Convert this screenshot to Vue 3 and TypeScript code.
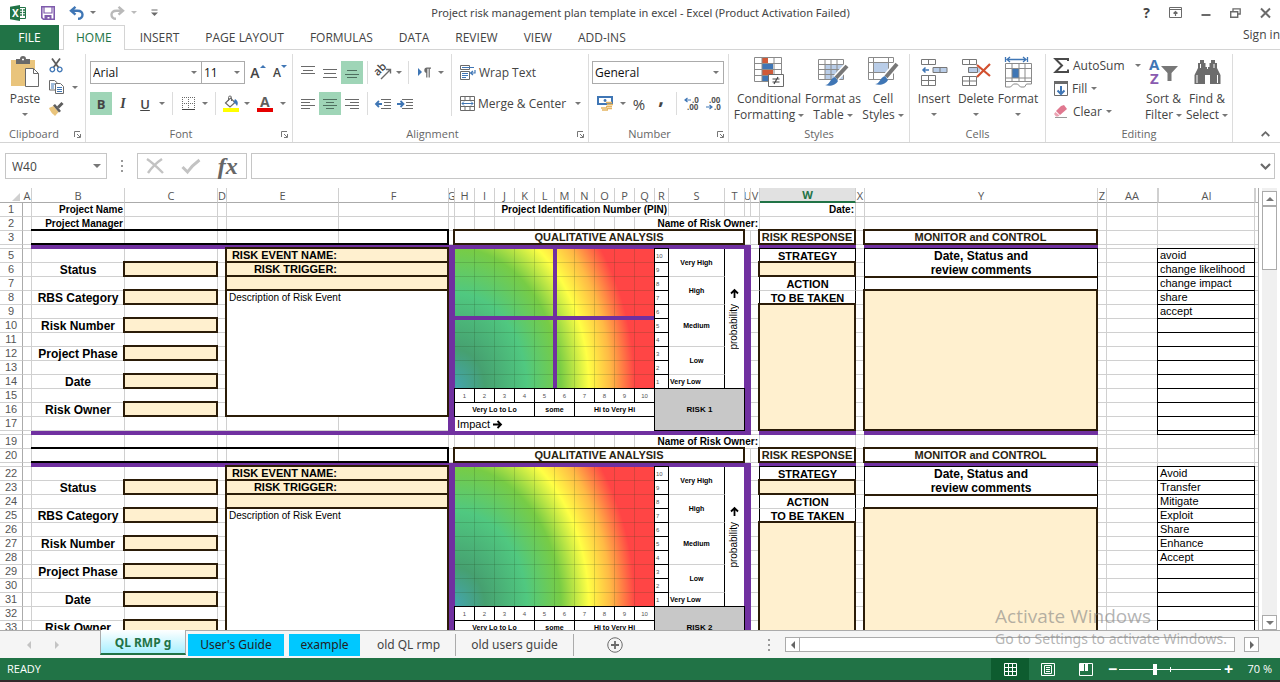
<script setup lang="ts">
import { h, type FunctionalComponent } from 'vue'

interface Shape { d?: string; f?: string; s?: string; w?: number; t?: string; x?: number; y?: number; z?: number; dash?: string }
interface Glyph { w: number; h: number; p: Shape[] }

const G = '#6a6a6a'
const B = '#3f76b5'
const icons: Record<string, Glyph> = {
  excel: { w: 17, h: 16, p: [
    { d: 'M9 2.5h6.5v11H9', f: '#fff', s: '#217346', w: 1 },
    { d: 'M10 5h2M13 5h2M10 7.500h2M13 7.500h2M10 10h2M13 10h2', s: '#217346', w: 1.4 },
    { d: 'M0 1.800L10 0v16L0 14.200z', f: '#217346' },
    { t: 'X', x: 2, y: 12, f: '#fff', z: 10 } ] },
  save: { w: 14, h: 14, p: [
    { d: 'M.8.8h12.400v12.400H2.400L.8 11.600z', s: '#7f5bac', w: 1.6 },
    { d: 'M3 1v6h8V1', s: '#7f5bac', w: 1.2 }, { d: 'M3.500 9h7v5h-2v-3H6.500v3h-3z', f: '#7f5bac' } ] },
  undo: { w: 15, h: 14, p: [{ d: 'M6.500.8L2 4.700l4.500 4M2 4.700h6.500c3.500 0 5 1.800 5 4S11.800 12.700 9 12.700', s: B, w: 2.4 }] },
  redo: { w: 15, h: 14, p: [{ d: 'M8.500.8L13 4.700l-4.500 4M13 4.700H6.500c-3.500 0-5 1.800-5 4s1.700 4 4.500 4', s: '#b9b9b9', w: 2.4 }] },
  customize: { w: 7, h: 7, p: [{ d: 'M.500 1h6', s: G, w: 1 }, { d: 'M0 3.500h7L3.500 7z', f: G }] },
  ribbonOpts: { w: 13, h: 11, p: [{ d: 'M.500.500h12v10H.500zM.500 2.500h12', s: G, w: 1 }, { d: 'M6.500 9V4.500M4.500 6.500l2-2 2 2', s: G, w: 1.2 }] },
  min: { w: 10, h: 10, p: [{ d: 'M.500 7h9', s: G, w: 2 }] },
  restore: { w: 11, h: 10, p: [{ d: 'M3 3V.800h7.200v5.200H8', s: G, w: 1.300 }, { d: 'M.700 3.700h7v5.500h-7z', s: G, w: 1.400 }] },
  close: { w: 11, h: 10, p: [{ d: 'M1 .500l9 9M10 .500l-9 9', s: G, w: 2 }] },
  paste: { w: 28, h: 31, p: [
    { d: 'M0 3h24v26H0z', f: '#e9c47c' }, { d: 'M5 7V2h4a3 3 0 0 1 6 0h4v5z', f: '#6a6a6a' }, { d: 'M11 2.500h2', s: '#fff', w: 1.5 },
    { d: 'M14.500 11.500h8l5 5v13h-13z', f: '#fff', s: G, w: 1 }, { d: 'M22.500 11.500v5h5', s: G, w: 1 } ] },
  cut: { w: 14, h: 15, p: [
    { d: 'M3 .500l6.500 9M11 .500l-6.500 9', s: '#5e5e5e', w: 1.800 },
    { d: 'M3.300 9.200a2.300 2.300 0 1 0 .1 0zM10.700 9.200a2.300 2.300 0 1 0 .1 0z', s: B, w: 1.300 } ] },
  copy: { w: 15, h: 14, p: [
    { d: 'M.500.500h5l3 2.500v7H.500z', f: '#fff', s: G, w: 1 }, { d: 'M2 4h4M2 6h3M2 8h3', s: B, w: 1 },
    { d: 'M6.500 3.500h5l3 3v7h-8z', f: '#fff', s: G, w: 1 }, { d: 'M8 7.500h5M8 9.500h5M8 11.500h5', s: B, w: 1 } ] },
  brush: { w: 15, h: 14, p: [
    { d: 'M0 6l4.500-2 5 6L6 14C4 12 2 11 0 6z', f: '#e9c47c' }, { d: 'M4 3.500l2-1.500 6 7-2 1.500z', f: '#5e5e5e' }, { d: 'M9 5.500l4.500-4.500', s: '#5e5e5e', w: 3 } ] },
  borders: { w: 13, h: 13, p: [{ d: 'M.500 0v12M6.500 0v12M12.500 0v12M0 .500h13M0 6.500h13', s: G, w: 1, dash: '1 1' }, { d: 'M0 12.500h13', s: '#444', w: 1 }] },
  fill: { w: 16, h: 16, p: [
    { d: 'M0 12h16v4H0z', f: '#ffff00' }, { d: 'M2.500 7l5-5 4.500 4.500-5 4.500z', f: '#fff', s: G, w: 1.200 },
    { d: 'M5.500 5V1.500a1.500 1.500 0 0 1 3 0V5', s: G, w: 1 }, { d: 'M12 3c3 2 3.500 4 2 7-1-1-1.500-3-3.500-3.500z', f: B } ] },
  fontColor: { w: 16, h: 16, p: [{ t: 'A', x: 3, y: 11, z: 14, f: '#5e5e5e' }, { d: 'M0 12h16v4H0z', f: '#e60000' }] },
  top: { w: 14, h: 12, p: [{ d: 'M0 1.500h14M2 5.500h10M0 8.500h14', s: G, w: 1 }] },
  mid: { w: 14, h: 12, p: [{ d: 'M0 2.500h14M1 6.500h12M0 10.500h14', s: G, w: 1 }] },
  bot: { w: 14, h: 12, p: [{ d: 'M2 3.500h10M0 7.500h14M2 10.500h10', s: '#4f6f5f', w: 1 }] },
  left: { w: 14, h: 12, p: [{ d: 'M0 1.500h14M0 4.500h9M0 7.500h14M0 10.500h9', s: G, w: 1 }] },
  center: { w: 14, h: 12, p: [{ d: 'M0 1.500h14M3 4.500h8M0 7.500h14M3 10.500h8', s: '#4f6f5f', w: 1 }] },
  right: { w: 14, h: 12, p: [{ d: 'M0 1.500h14M5 4.500h9M0 7.500h14M5 10.500h9', s: G, w: 1 }] },
  orient: { w: 17, h: 15, p: [{ d: 'M6 14L15 5M11 4.500h4.500v4', s: G, w: 1.400 }] },
  para: { w: 13, h: 11, p: [{ d: 'M0 1l4 4-4 4z', f: B }, { d: 'M9 1.200h4M8.800 1v9.500M11.200 1v9.500', s: G, w: 1.200 }, { d: 'M9 .600a2.700 2.700 0 0 0 0 5.400z', f: G }] },
  dedent: { w: 16, h: 12, p: [{ d: 'M6 1.500h10M9 4.500h7M9 7.500h7M6 10.500h10', s: G, w: 1 }, { d: 'M7 6H1.500M4 3L1 6l3 3', s: B, w: 1.800 }] },
  indent: { w: 16, h: 12, p: [{ d: 'M5 1.500h11M9 4.500h7M9 7.500h7M5 10.500h11', s: G, w: 1 }, { d: 'M0 6h6M3.500 3l3 3-3 3', s: B, w: 1.800 }] },
  wrap: { w: 16, h: 15, p: [
    { d: 'M.500.500h9v4h-9zM.500 6.500h9v8h-9z', s: G, w: 1 }, { d: 'M2 2.500h12M2 8.500h6M2 10.500h6M2 12.500h4', s: B, w: 1 },
    { d: 'M15 5v3h-4M13 6l-2.500 2 2.500 2', s: B, w: 1.200 } ] },
  merge: { w: 15, h: 15, p: [
    { d: 'M.500.500h14v14H.500zM.500 4.500h14M.500 10.500h14M5 .500v4M10 .500v4M5 10.500v4M10 10.500v4', s: G, w: 1 },
    { d: 'M2 7.500h11M4 5.500l-2 2 2 2M11 5.500l2 2-2 2', s: B, w: 1 } ] },
  money: { w: 17, h: 16, p: [
    { d: 'M1 1h14v7H1z', f: '#fff', s: B, w: 2 }, { d: 'M8 3a1.500 1.500 0 1 0 .1 0z', f: B },
    { d: 'M9 6.500h6M10 8.500h6M9 10.500h6M4 12h6M5 14h6M10 12.500h5', s: '#e5b562', w: 1.500 } ] },
  incDec: { w: 16, h: 14, p: [{ t: '.0', x: 8, y: 6, z: 8, f: '#555' }, { t: '.00', x: 3, y: 13, z: 8, f: '#555' }, { d: 'M7 3H1M3.500 1L1 3l2.500 2', s: B, w: 1.200 }] },
  decDec: { w: 16, h: 14, p: [{ t: '.00', x: 3, y: 6, z: 8, f: '#555' }, { t: '.0', x: 8, y: 13, z: 8, f: '#555' }, { d: 'M0 10h6M3.500 8l2.500 2-2.500 2', s: B, w: 1.200 }] },
  cond: { w: 30, h: 30, p: [
    { d: 'M8 0h6v6H8zM8 13h11v6H8z', f: '#d05a38' }, { d: 'M8 6h11v7H8zM8 19h6v6H8z', f: B },
    { d: 'M.500.500h27v24H.500zM.500 6.500h27M.500 12.500h27M.500 18.500h27M8 .500v24M20 .500v24', s: '#8a8a8a', w: 1 },
    { d: 'M14.500 17.500h15v12h-15z', f: '#fff', s: G, w: 1 }, { d: 'M18.500 22h7M18.500 25h7M24 20l-4 7', s: '#444', w: 1.200 } ] },
  fmtTable: { w: 31, h: 30, p: [
    { d: 'M7 8h18v15H7z', f: '#b9cde8' }, { d: 'M.500 2.500h25v20H.500zM.500 7.500h25M.500 12.500h25M.500 17.500h25M7 2.500v20M13 2.500v20M19 2.500v20', s: '#8a8a8a', w: 1 },
    { d: 'M29 9L18 21', s: '#fff', w: 7 }, { d: 'M29 9L18 21', s: '#777', w: 4 }, { d: 'M7 28c5 0 5-7 10-8l3 4c-2 4-8 6-13 4z', f: B } ] },
  cellStyles: { w: 31, h: 30, p: [
    { d: 'M6 6h15v9H6z', f: '#b9cde8' }, { d: 'M.500.500h25v22H.500zM.500 5.500h25M.500 15.500h25M5.500 .500v22M20.500 .500v22', s: '#8a8a8a', w: 1 },
    { d: 'M29 7L18 20', s: '#fff', w: 7 }, { d: 'M29 7L18 20', s: '#777', w: 4 }, { d: 'M7 27c5 0 5-7 10-8l3 4c-2 4-8 6-13 4z', f: B } ] },
  insert: { w: 27, h: 29, p: [
    { d: 'M12 9.500h14v5H12z', f: '#b9cde8' },
    { d: 'M.500 1.500h14v5H.500zM7.500 1.500v5M12 9.500h14v5H12zM19 9.500v5M.500 17.500h14v10H.500zM.500 22.500h14M7.500 17.500v10', s: '#777', w: 1 },
    { d: 'M8 12H2M4.500 9.500L2 12l2.500 2.500', s: B, w: 1.500 } ] },
  del: { w: 29, h: 29, p: [
    { d: 'M6 9.500h12v5H6z', f: '#b9cde8' },
    { d: 'M.500 1.500h14v5H.500zM7.500 1.500v5M6.500 9.500h9v5h-9zM.500 18.500h14v9H.500zM.500 23h14M7.500 18.500v9', s: '#777', w: 1 },
    { d: 'M15 7l13 11M28 6L15 19', s: '#d2502f', w: 2.200 } ] },
  format: { w: 29, h: 31, p: [
    { d: 'M8 12h7v9H8z', f: B }, { d: 'M1.500 6.500h26v18h-26zM1.500 11.500h26M1.500 21h26M8 6.500v18M15 6.500v18M21 6.500v18', s: '#8a8a8a', w: 1 },
    { d: 'M1.500 24v6h5l3-3h4l3 3h4l2-3h5v-3', s: '#8a8a8a', w: 1 },
    { d: 'M1.500 0v5M23.500 0v5M3 2.500h19M6 0L3 2.500 6 5M19 0l3 2.500L19 5', s: B, w: 1.300 } ] },
  sum: { w: 15, h: 15, p: [{ d: 'M14 3V1H1.500l6.500 6.500L1.500 14H14v-2.500', s: '#4a4a4a', w: 2 }] },
  fillDown: { w: 14, h: 15, p: [{ d: 'M.500.500h13v14H.500z', f: '#fff', s: G, w: 1 }, { d: 'M0 0h14v3H0z', f: G }, { d: 'M7 5v8M3.500 9.500L7 13l3.500-3.500', s: B, w: 2 }] },
  clear: { w: 15, h: 13, p: [{ d: 'M7 1l3-1 3 4-7 6-4-4z', f: '#e0788f' }, { d: 'M1.500 7l4 3.500-1.500 1H2L0 9z', f: '#eba2b2' }, { d: 'M1 12.500h12', s: '#999', w: 1 }] },
  sort: { w: 29, h: 29, p: [
    { t: 'A', x: 0, y: 12, z: 15, f: B }, { t: 'Z', x: 1, y: 26, z: 15, f: '#8a5bb0' },
    { d: 'M12 8h17l-6.500 7v8h-4v-8z', f: '#777' } ] },
  find: { w: 27, h: 25, p: [
    { d: 'M6 0h4v3h1.500v4H13V9h1V7h1.500V3H17V0h4v3h2v5l3.500 7v9H16v-9h-5v9H.500v-9L4 8V3h2z', f: '#6c6c6c' },
    { d: 'M3 15v8M23.500 15v8M6.500 4v4M20 4v4', s: '#fff', w: 1 } ] },
  launcher: { w: 7, h: 7, p: [{ d: 'M.500 6V.500H6', s: '#777', w: 1 }, { d: 'M3 3l3 3M6.500 3v3.500H3', s: '#777', w: 1 }] },
  up: { w: 9, h: 6, p: [{ d: 'M.700 5l3.800-3.800L8.300 5', s: G, w: 1.800 }] },
  down: { w: 11, h: 7, p: [{ d: 'M1 1l4.500 4.500L10 1', s: G, w: 2.200 }] },
  cancel: { w: 18, h: 16, p: [{ d: 'M1 1c6 4 10 8 16 14M16 1C10 5 6 9 2 15', s: '#c3c3c3', w: 2.400 }] },
  enter: { w: 20, h: 15, p: [{ d: 'M1.500 8l5 5C10 8 13 5 18.500 1', s: '#c3c3c3', w: 3 }] },
  arrowR: { w: 9, h: 9, p: [{ d: 'M0 4.500h7.500M4.500 1L8 4.500 4.500 8', s: '#000', w: 1.800 }] },
  arrowU: { w: 9, h: 9, p: [{ d: 'M4.500 9V1.500M1 4.500L4.500 1 8 4.500', s: '#000', w: 1.800 }] },
  plus: { w: 16, h: 16, p: [{ d: 'M8 .800a7.200 7.200 0 1 0 .010 0z', s: G, w: 1 }, { d: 'M8 4v8M4 8h8', s: G, w: 1.800 }] },
  normal: { w: 13, h: 13, p: [{ d: 'M.500.500h12v12H.500zM.500 4.500h12M.500 8.500h12M4.500.500v12M8.500.500v12', s: '#fff', w: 1 }] },
  page: { w: 14, h: 13, p: [{ d: 'M.500.500h13v12H.500z', s: '#fff', w: 1 }, { d: 'M3.500 2.500h7v8h-7zM5 4.500h4M5 6.500h4M5 8.500h4', s: '#fff', w: 1 }] },
  breaks: { w: 14, h: 13, p: [{ d: 'M.500.500h13v12H.500z', s: '#fff', w: 1 }, { d: 'M1 1h4v7H1zM6 1h3v7H6z', f: '#fff' }] },
}

const Icon: FunctionalComponent<{ n: string }> = (props) => {
  const g = icons[props.n]
  return h('svg', { width: g.w, height: g.h, viewBox: `0 0 ${g.w} ${g.h}`, 'aria-hidden': 'true', style: { display: 'block', flex: 'none', overflow: 'visible' } },
    g.p.map((s) => s.t
      ? h('text', { x: s.x, y: s.y, fill: s.f, 'font-size': s.z, 'font-weight': 700, 'font-family': '"Open Sans", sans-serif' }, s.t)
      : h('path', { d: s.d, fill: s.f ?? 'none', stroke: s.s, 'stroke-width': s.w, 'stroke-dasharray': s.dash })))
}
Icon.props = ['n']

const tabs = ['HOME', 'INSERT', 'PAGE LAYOUT', 'FORMULAS', 'DATA', 'REVIEW', 'VIEW', 'ADD-INS']

const columns: [string, number][] = [
  ['A', 9], ['B', 93], ['C', 93], ['D', 9], ['E', 112], ['F', 110], ['G', 6],
  ['H', 20], ['I', 20], ['J', 20], ['K', 20], ['L', 20], ['M', 20], ['N', 20], ['O', 20], ['P', 20], ['Q', 20],
  ['R', 14], ['S', 56], ['T', 20], ['U', 6], ['V', 9], ['W', 96], ['X', 9], ['Y', 233], ['Z', 9], ['AA', 51], ['AI', 97], ['', 0],
]
const names = columns.map((c) => c[0])
const col = (name: string) => names.indexOf(name) + 1
const LAST = 35
const thin = new Set([4, 18, 21, 35])
const gridStyle = {
  gridTemplateColumns: '23px ' + columns.map(([, w]) => (w ? `${w}px` : 'minmax(4px, 1fr)')).join(' '),
  gridTemplateRows: '15px ' + Array.from({ length: LAST }, (_, i) => (thin.has(i + 1) ? '4px' : '14px')).join(' '),
}

interface Cell { r: number; c: number; rs: number; cs: number; cls: string; text?: string; icon?: string; over?: boolean }
const cells: Cell[] = []
function put(from: string, r: number, to: string, r2: number, cls: string, text?: string, extra: Partial<Cell> = {}) {
  cells.push({ r, c: col(from), rs: r2 - r + 1, cs: col(to) - col(from) + 1, cls, text, ...extra })
}

put('B', 1, 'B', 1, 'lead end', 'Project Name')
put('B', 2, 'B', 2, 'lead end', 'Project Manager')
put('J', 1, 'R', 1, 'lead end', 'Project Identification Number (PIN)')
put('W', 1, 'W', 1, 'lead end', 'Date:')

function block(r0: number, risk: string, options: string[]) {
  put('Q', r0 - 1, 'V', r0 - 1, 'lead end', 'Name of Risk Owner:')
  put('B', r0, 'F', r0, 'band', undefined, { over: true })
  put('H', r0, 'T', r0, 'thick caps olive', 'QUALITATIVE ANALYSIS')
  put('W', r0, 'W', r0, 'thick caps olive', 'RISK RESPONSE')
  put('Y', r0, 'Y', r0, 'thick caps olive', 'MONITOR and CONTROL')
  for (const r of [r0 + 1, r0 + 15]) {
    put('B', r, 'U', r, 'purple')
    put('W', r, 'W', r, 'purple')
    put('Y', r, 'Y', r, 'purple')
  }
  put('G', r0 + 2, 'G', r0 + 14, 'purple')
  put('U', r0 + 2, 'U', r0 + 14, 'purple')
  const fields = ['Status', 'RBS Category', 'Risk Number', 'Project Phase', 'Date', 'Risk Owner']
  fields.forEach((f, i) => {
    put('B', r0 + 3 + i * 2, 'B', r0 + 3 + i * 2, 'label', f)
    put('C', r0 + 3 + i * 2, 'C', r0 + 3 + i * 2, 'thick cream')
  })
  put('E', r0 + 2, 'F', r0 + 2, 'thick cream caps event', 'RISK EVENT NAME:')
  put('E', r0 + 3, 'F', r0 + 3, 'thick cream caps event', 'RISK TRIGGER:')
  put('E', r0 + 4, 'F', r0 + 4, 'thick cream')
  put('E', r0 + 5, 'F', r0 + 13, 'thick desc', 'Description of Risk Event')

  put('H', r0 + 2, 'Q', r0 + 11, risk === 'RISK 1' ? 'heat cross' : 'heat')
  for (let i = 0; i < 10; i++) {
    put('R', r0 + 2 + i, 'R', r0 + 2 + i, 'box tick', String(10 - i))
    const c = names[col('H') - 1 + i]
    put(c, r0 + 12, c, r0 + 12, 'box tick mid', String(i + 1))
  }
  put('S', r0 + 2, 'S', r0 + 3, 'scale', 'Very High')
  put('S', r0 + 4, 'S', r0 + 5, 'scale', 'High')
  put('S', r0 + 6, 'S', r0 + 8, 'scale', 'Medium')
  put('S', r0 + 9, 'S', r0 + 10, 'scale', 'Low')
  put('S', r0 + 11, 'S', r0 + 11, 'scale start', 'Very Low')
  put('T', r0 + 2, 'T', r0 + 11, 'prob', 'probability', { icon: 'arrowU' })
  put('H', r0 + 13, 'K', r0 + 13, 'box scaleb', 'Very Lo to Lo')
  put('L', r0 + 13, 'M', r0 + 13, 'box scaleb', 'some')
  put('N', r0 + 13, 'Q', r0 + 13, 'box scaleb', 'Hi to Very Hi')
  put('H', r0 + 14, 'Q', r0 + 14, 'impact', 'Impact', { icon: 'arrowR' })
  put('R', r0 + 12, 'T', r0 + 14, 'box risk', risk)

  put('W', r0 + 2, 'W', r0 + 2, 'box caps', 'STRATEGY')
  put('W', r0 + 3, 'W', r0 + 3, 'thick cream')
  put('W', r0 + 4, 'W', r0 + 4, 'sides caps', 'ACTION')
  put('W', r0 + 5, 'W', r0 + 5, 'sides caps', 'TO BE TAKEN')
  put('W', r0 + 6, 'W', r0 + 14, 'thick cream')
  put('Y', r0 + 2, 'Y', r0 + 3, 'box label two', 'Date, Status and\nreview comments')
  put('Y', r0 + 4, 'Y', r0 + 4, 'box ruled')
  put('Y', r0 + 5, 'Y', r0 + 14, 'thick cream')
  for (let i = 0; i < 14; i++) put('AI', r0 + 2 + i, 'AI', r0 + 2 + i, 'box option', options[i])
}
block(3, 'RISK 1', ['avoid', 'change likelihood', 'change impact', 'share', 'accept'])
block(20, 'RISK 2', ['Avoid', 'Transfer', 'Mitigate', 'Exploit', 'Share', 'Enhance', 'Accept'])

const covered = new Set<string>()
for (const x of cells) {
  if (x.over) continue
  for (let r = x.r; r < x.r + x.rs; r++) for (let c = x.c; c < x.c + x.cs; c++) covered.add(`${r}:${c}`)
}
const rows = Array.from({ length: LAST }, (_, i) => {
  const r = i + 1
  const list = cells.filter((x) => x.r === r)
  for (let c = 1; c <= columns.length; c++) if (!covered.has(`${r}:${c}`)) list.push({ r, c, rs: 1, cs: 1, cls: 'plain' })
  return { r, label: thin.has(r) ? '' : String(r), list: list.sort((a, b) => a.c - b.c) }
})
const area = (x: Cell) => ({ gridArea: `${x.r + 1} / ${x.c + 1} / span ${x.rs} / span ${x.cs}` })
</script>

<template>
  <div class="app">
    <header class="titlebar">
      <div class="quick">
        <Icon n="excel" />
        <button class="save" aria-label="Save"><Icon n="save" /></button>
        <button class="gap" aria-label="Undo"><Icon n="undo" /><i class="caret"></i></button>
        <button class="gap" aria-label="Redo"><Icon n="redo" /><i class="caret pale"></i></button>
        <button aria-label="Customize Quick Access Toolbar"><Icon n="customize" /></button>
      </div>
      <h1>Project risk management plan template in excel - Excel (Product Activation Failed)</h1>
      <div class="window">
        <button class="help" aria-label="Help">?</button>
        <button aria-label="Ribbon display options"><Icon n="ribbonOpts" /></button>
        <button aria-label="Minimize"><Icon n="min" /></button>
        <button aria-label="Restore"><Icon n="restore" /></button>
        <button aria-label="Close"><Icon n="close" /></button>
      </div>
    </header>

    <nav class="tabs">
      <button class="file">FILE</button>
      <button v-for="t in tabs" :key="t" class="tab" :class="{ on: t === 'HOME' }">{{ t }}</button>
      <a class="signin" href="#">Sign in</a>
    </nav>

    <section class="ribbon">
      <div class="group clip">
        <div class="body">
          <button class="big"><span class="pic"><Icon n="paste" /></span>Paste<i class="caret"></i></button>
          <div class="stack">
            <button aria-label="Cut"><Icon n="cut" /></button>
            <button aria-label="Copy"><Icon n="copy" /><i class="caret"></i></button>
            <button aria-label="Format Painter"><Icon n="brush" /></button>
          </div>
        </div>
        <footer>Clipboard<Icon class="launch" n="launcher" /></footer>
      </div>

      <div class="group font">
        <div class="body lines">
          <div class="line">
            <label class="drop family"><select aria-label="Font"><option>Arial</option></select></label>
            <label class="drop size"><select aria-label="Font size"><option>11</option></select></label>
            <button class="sq grow" aria-label="Increase font size">A<i class="caret blue flip"></i></button>
            <button class="sq shrink" aria-label="Decrease font size">A<i class="caret blue"></i></button>
          </div>
          <div class="line">
            <button class="sq on" aria-label="Bold"><b>B</b></button>
            <button class="sq" aria-label="Italic"><em>I</em></button>
            <button class="sq" aria-label="Underline"><u>U</u></button>
            <button class="cr" aria-label="Underline styles"><i class="caret"></i></button>
            <span class="sep"></span>
            <button class="sq" aria-label="Borders"><Icon n="borders" /></button>
            <button class="cr" aria-label="Border styles"><i class="caret"></i></button>
            <span class="sep"></span>
            <button class="sq" aria-label="Fill color"><Icon n="fill" /></button>
            <button class="cr near" aria-label="Fill colors"><i class="caret"></i></button>
            <button class="sq wide" aria-label="Font color"><Icon n="fontColor" /></button>
            <button class="cr near" aria-label="Font colors"><i class="caret"></i></button>
          </div>
        </div>
        <footer>Font<Icon class="launch" n="launcher" /></footer>
      </div>

      <div class="group align">
        <div class="body">
          <div class="lines">
            <div class="line">
              <button class="sq hi" aria-label="Top align"><Icon n="top" /></button>
              <button class="sq" aria-label="Middle align"><Icon n="mid" /></button>
              <button class="sq on" aria-label="Bottom align"><Icon n="bot" /></button>
              <span class="sep"></span>
              <button class="sq orient" aria-label="Orientation"><span>ab</span><Icon n="orient" /></button>
              <button class="cr near" aria-label="Orientations"><i class="caret"></i></button>
              <span class="sep"></span>
              <button class="sq" aria-label="Text direction"><Icon n="para" /></button>
              <button class="cr" aria-label="Text directions"><i class="caret"></i></button>
            </div>
            <div class="line">
              <button class="sq" aria-label="Align left"><Icon n="left" /></button>
              <button class="sq on" aria-label="Center"><Icon n="center" /></button>
              <button class="sq" aria-label="Align right"><Icon n="right" /></button>
              <span class="sep"></span>
              <button class="sq" aria-label="Decrease indent"><Icon n="dedent" /></button>
              <button class="sq" aria-label="Increase indent"><Icon n="indent" /></button>
            </div>
          </div>
          <div class="lines wraps">
            <button class="line"><Icon n="wrap" />Wrap Text</button>
            <button class="line"><Icon n="merge" />Merge &amp; Center<i class="caret far"></i></button>
          </div>
        </div>
        <footer>Alignment<Icon class="launch" n="launcher" /></footer>
      </div>

      <div class="group number">
        <div class="body lines">
          <label class="drop general"><select aria-label="Number format"><option>General</option></select></label>
          <div class="line">
            <button class="sq wide" aria-label="Accounting format"><Icon n="money" /></button>
            <button class="cr near" aria-label="Currencies"><i class="caret"></i></button>
            <button class="sq pct" aria-label="Percent style">%</button>
            <button class="sq comma" aria-label="Comma style">,</button>
            <span class="sep"></span>
            <button class="sq" aria-label="Increase decimal"><Icon n="incDec" /></button>
            <button class="sq" aria-label="Decrease decimal"><Icon n="decDec" /></button>
          </div>
        </div>
        <footer>Number<Icon class="launch" n="launcher" /></footer>
      </div>

      <div class="group styles">
        <div class="body">
          <button class="big w68"><span class="pic"><Icon n="cond" /></span>Conditional<span>Formatting<i class="caret"></i></span></button>
          <button class="big w60"><span class="pic"><Icon n="fmtTable" /></span>Format as<span>Table<i class="caret"></i></span></button>
          <button class="big w40"><span class="pic"><Icon n="cellStyles" /></span>Cell<span>Styles<i class="caret"></i></span></button>
        </div>
        <footer>Styles</footer>
      </div>

      <div class="group cellsg">
        <div class="body">
          <button class="big w42"><span class="pic"><Icon n="insert" /></span>Insert<i class="caret"></i></button>
          <button class="big w42"><span class="pic"><Icon n="del" /></span>Delete<i class="caret"></i></button>
          <button class="big w42"><span class="pic"><Icon n="format" /></span>Format<i class="caret"></i></button>
        </div>
        <footer>Cells</footer>
      </div>

      <div class="group editing">
        <div class="body">
          <div class="edits">
            <button><Icon n="sum" />AutoSum<i class="caret far"></i></button>
            <button><Icon n="fillDown" />Fill<i class="caret"></i></button>
            <button><Icon n="clear" />Clear<i class="caret"></i></button>
          </div>
          <button class="big w44"><span class="pic"><Icon n="sort" /></span>Sort &amp;<span>Filter<i class="caret"></i></span></button>
          <button class="big w42"><span class="pic"><Icon n="find" /></span>Find &amp;<span>Select<i class="caret"></i></span></button>
        </div>
        <footer>Editing</footer>
      </div>
      <button class="collapse" aria-label="Collapse the ribbon"><Icon n="up" /></button>
    </section>

    <section class="formula">
      <label class="namebox"><input aria-label="Name box" value="W40"><i class="caret large"></i></label>
      <span class="dots"></span>
      <div class="fx">
        <button aria-label="Cancel"><Icon n="cancel" /></button>
        <button aria-label="Enter"><Icon n="enter" /></button>
        <button class="fn" aria-label="Insert function">fx</button>
      </div>
      <label class="entry"><input aria-label="Formula bar"><Icon n="down" /></label>
    </section>

    <main class="sheet">
      <table :style="gridStyle">
        <thead>
          <tr>
            <th class="corner" aria-label="Select all"></th>
            <th v-for="(n, i) in names" :key="i" class="colhead" :class="{ sel: n === 'W', open: n === 'AI' || n === '' }" scope="col">{{ n }}</th>
          </tr>
        </thead>
        <tbody>
          <tr v-for="row in rows" :key="row.r">
            <th class="rowhead" scope="row">{{ row.label }}</th>
            <td v-for="x in row.list" :key="x.c + x.cls" :class="x.cls" :style="area(x)"><span v-if="x.text">{{ x.text }}</span><Icon v-if="x.icon" :n="x.icon" /></td>
          </tr>
        </tbody>
      </table>
      <div class="vscroll">
        <button aria-label="Scroll up"><i class="caret large flip"></i></button>
        <div class="thumb"></div>
        <span class="spring"></span>
        <button aria-label="Scroll down"><i class="caret large"></i></button>
      </div>
    </main>

    <footer class="sheets">
      <button class="nav" aria-label="Previous sheets"><i class="side l"></i></button>
      <button class="nav" aria-label="Next sheets"><i class="side r"></i></button>
      <button class="st active">QL RMP g</button>
      <button class="st cyan guide">User's Guide</button>
      <button class="st cyan example">example</button>
      <button class="st bar">old QL rmp</button>
      <button class="st bar">old users guide</button>
      <button class="add" aria-label="New sheet"><Icon n="plus" /></button>
      <span class="dots"></span>
      <div class="hscroll">
        <button aria-label="Scroll left"><i class="side dark l"></i></button>
        <div class="thumb"></div>
        <button aria-label="Scroll right"><i class="side dark r"></i></button>
      </div>
    </footer>

    <footer class="status">
      <span class="ready">READY</span>
      <button class="view on" aria-label="Normal view"><Icon n="normal" /></button>
      <button class="view" aria-label="Page layout view"><Icon n="page" /></button>
      <button class="view" aria-label="Page break preview"><Icon n="breaks" /></button>
      <button class="zoom" aria-label="Zoom out">−</button>
      <input type="range" min="0" max="100" value="34" aria-label="Zoom">
      <button class="zoom" aria-label="Zoom in">+</button>
      <span class="pc">70 %</span>
    </footer>
    <div class="edge"></div>

    <aside class="activate">
      <p class="big1">Activate Windows</p>
      <p>Go to Settings to activate Windows.</p>
    </aside>
  </div>
</template>

<style>
body { margin: 0; background: #fff; }
</style>

<style scoped>
.app { position: relative; display: flex; flex-direction: column; height: 100vh; overflow: hidden; background: #fff; color: #444; font: 12px/16px "Open Sans", "Noto Sans", sans-serif; }
.app * { box-sizing: border-box; }
button { display: flex; align-items: center; justify-content: center; padding: 0; border: 0; background: none; color: inherit; font: inherit; white-space: nowrap; }
.caret { flex: none; width: 0; height: 0; border: 3px solid transparent; border-top: 3px solid #777; border-bottom: 0; }
.caret.large { border-width: 4px; border-bottom: 0; }
.caret.pale { border-top-color: #bbb; }
.caret.blue { border-top-color: #3f76b5; }
.flip { transform: rotate(180deg); }

.titlebar { flex: none; display: flex; align-items: center; height: 25px; padding: 0 9px 0 10px; }
.quick { flex: 1; display: flex; align-items: center; height: 22px; gap: 14px; }
.quick .gap { gap: 6px; }
.titlebar h1 { margin: 0; font: 400 11px/22px "Noto Sans", sans-serif; white-space: nowrap; }
.window { flex: 1; display: flex; justify-content: flex-end; align-items: center; height: 22px; gap: 19px; }
.help { font-size: 14px; font-weight: 700; }

.tabs { flex: none; display: flex; height: 25px; border-bottom: 1px solid #d4d4d4; }
.file { width: 59px; height: 25px; margin-right: 4px; background: #217346; color: #fff; }
.tab { height: 25px; padding: 0 13px; }
.tab.on { margin-right: 2px; padding: 0 12px; border: 1px solid #d4d4d4; border-bottom: 0; background: #fff; color: #217346; }
.signin { margin-left: auto; color: #444; text-decoration: none; line-height: 20px; }

.ribbon { flex: none; display: flex; height: 93px; padding: 4px 0 0; border-bottom: 1px solid #d4d4d4; }
.group { position: relative; flex: none; display: flex; flex-direction: column; border-right: 1px solid #dcdcdc; }
.group footer { position: relative; height: 16px; text-align: center; font-size: 11px; color: #666; }
.launch { position: absolute; right: 4px; bottom: 4px; }
.body { flex: 1; display: flex; }
.clip { width: 86px; }
.clip footer { padding-right: 17px; }
.font { width: 207px; }
.font footer { padding-right: 16px; }
.align { width: 296px; }
.align footer { padding-right: 16px; }
.number { width: 140px; }
.number footer { padding-right: 18px; }
.styles { width: 181px; }
.cellsg { width: 136px; }
.editing { width: 187px; }
.big { flex-direction: column; justify-content: flex-start; width: 36px; }
.big span:not(.pic) { display: flex; align-items: center; gap: 3px; }
.big > .caret { margin-top: 6px; }
.pic { display: flex; align-items: center; justify-content: center; height: 37px; padding-bottom: 1px; }
.w68 { width: 72px; }
.w60 { width: 56px; }
.w40 { width: 44px; }
.w42 { width: 42px; }
.w44 { width: 45px; }
.clip .body { padding-left: 7px; }
.stack { display: flex; flex-direction: column; margin-left: 6px; }
.stack button { height: 22px; justify-content: flex-start; gap: 8px; }
.styles .body { padding-left: 4px; }
.cellsg .body { padding-left: 3px; }

.lines { display: flex; flex-direction: column; gap: 8px; padding-top: 7px; }
.line { display: flex; align-items: center; height: 23px; }
.number .lines { padding-left: 3px; }
.font .lines { padding-left: 4px; }
.align .lines { padding-left: 4px; }
.align .wraps { height: 62px; margin-left: 4px; padding-left: 8px; border-left: 1px solid #dcdcdc; align-items: flex-start; }
.wraps .line { gap: 3px; }
.far { margin-left: 6px; }
.drop { position: relative; display: block; height: 23px; border: 1px solid #ababab; }
.drop::after { content: ""; position: absolute; right: 4px; top: 9px; border: 3px solid transparent; border-top-color: #777; border-bottom: 0; }
.drop select { width: 100%; height: 100%; padding: 0 2px; border: 0; background: none; appearance: none; color: #111; font: inherit; }
.family { width: 112px; }
.size { width: 43px; border-left: 0; }
.general { width: 132px; }
.sq { width: 22px; height: 23px; }
.sq.on { background: #9fd5b7; }
.hi { padding-bottom: 4px; }
.sq.wide { width: 26px; }
.sq b { font-size: 13px; }
.sq em { font: italic 700 14px "Liberation Serif", serif; }
.sq u { font-size: 13px; font-weight: 600; }
.grow { font-size: 14px; font-weight: 600; margin-left: 2px; }
.shrink { font-size: 12px; font-weight: 600; }
.sq > .blue { align-self: flex-start; margin-top: 4px; }
.cr { width: 12px; height: 23px; }
.cr.near { width: 10px; }
.sep { width: 1px; height: 23px; margin: 0 4px; background: #dcdcdc; }
.orient { position: relative; }
.orient span { position: absolute; left: 1px; top: 0; font-size: 11px; font-weight: 600; transform: rotate(-45deg); }
.pct { font-size: 15px; }
.comma { padding-bottom: 14px; font-size: 20px; font-weight: 700; }

.edits { width: 95px; padding: 0 0 0 8px; display: flex; flex-direction: column; }
.edits button { height: 23px; justify-content: flex-start; gap: 4px; }
.collapse { margin: auto 10px 5px auto; }

.formula { flex: none; display: flex; height: 45px; padding: 10px 5px 9px; }
.formula label, .fx { display: flex; align-items: center; height: 26px; border: 1px solid #c6c6c6; }
.formula input { flex: 1; min-width: 0; height: 100%; padding: 0 6px; border: 0; outline: 0; background: none; color: #444; font: inherit; }
.namebox { width: 102px; padding-right: 5px; }
.dots { width: 2px; height: 12px; margin: 7px 14px; background: repeating-linear-gradient(#999 0 2px, transparent 2px 5px); }
.fx { width: 110px; justify-content: space-around; }
.fn { font: italic 700 24px/22px "Liberation Serif", serif; color: #666; }
.formula .entry { flex: 1; margin-left: 4px; padding-right: 3px; }

.sheet { flex: 1; min-height: 0; display: flex; overflow: hidden; }
table { flex: 1; min-width: 0; display: grid; align-content: start; overflow: hidden; border-right: 1px solid #ababab; font: 10px/14px "Liberation Sans", Arial, sans-serif; color: #000; }
thead, tbody, tr { display: contents; }
th, td { display: flex; align-items: center; min-width: 0; min-height: 0; padding: 0; border: solid #d0d0d0; border-width: 0 1px 1px 0; white-space: nowrap; }
th { justify-content: center; overflow: hidden; font: 11px/13px "Open Sans", sans-serif; color: #555; }
.colhead { border-bottom-color: #ababab; }
.colhead.sel { border-bottom: 2px solid #217346; background: #e1e1e1; color: #217346; font-weight: 700; }
.colhead.open { border-left: 1px solid #d0d0d0; }
.corner { border-right: 0; border-bottom-color: #ababab; }
.corner::after { content: ""; margin: 4px 0 0 8px; border: 4px solid transparent; border-right-color: #d0d0d0; border-bottom-color: #d0d0d0; }
.rowhead { grid-column: 1; border-right-color: #ababab; font-family: "Liberation Sans", Arial, sans-serif; }
td { z-index: 1; }
td.plain { z-index: 0; }
.lead { padding-right: 1px; font-weight: 700; background: #fff; }
.end { justify-content: flex-end; }
.band { z-index: 3; margin: -2px 0 0 -1px; border: solid #000; border-width: 2px 2px 2px 0; }
.thick { z-index: 3; margin: -2px 0 0 -2px; border: 2px solid #2b1c08; background: #fff; justify-content: center; }
.box { z-index: 2; margin: -1px 0 0 -1px; border: 1px solid #000; background: #fff; justify-content: center; }
.caps { font-weight: 700; font-size: 11px; }
.olive { color: #2a2410; }
.label { justify-content: center; font-size: 12px; font-weight: 700; }
.cream { background: #fff0cf; }
.event { justify-content: flex-end; padding-right: 110px; }
.desc { align-items: flex-start; justify-content: flex-start; padding-left: 2px; }
.purple { z-index: 2; margin-left: -1px; border: 0; background: #7030a0; }
.heat { --g: rgba(30, 60, 20, .18); --blend: radial-gradient(100% 190% at 0 100%, #44a5b0 0, #46a070 15%, #50c880 36%, #78cc45 53%, #ffff45 67%, #ffb945 78%, #ff4545 90%);
  border: 0; background:
  linear-gradient(to left, var(--g) 1px, transparent 1px) 0 0 / 20px 14px,
  linear-gradient(to top, var(--g) 1px, transparent 1px) 0 0 / 20px 14px,
  var(--blend); }
.heat.cross { background:
  linear-gradient(#7030a0, #7030a0) 98px 0 / 4px 100% no-repeat,
  linear-gradient(#7030a0, #7030a0) 0 67px / 100% 4px no-repeat,
  linear-gradient(to left, var(--g) 1px, transparent 1px) 0 0 / 20px 14px,
  linear-gradient(to top, var(--g) 1px, transparent 1px) 0 0 / 20px 14px,
  var(--blend); }
.tick { justify-content: flex-start; padding-left: 1px; font-size: 6px; color: #555; }
.tick.mid { justify-content: center; padding: 0; }
.scale, .scaleb { justify-content: center; font-size: 7px; font-weight: 700; background: #fff; }
.scale { border-right-color: #000; }
.scale.start { justify-content: flex-start; padding-left: 1px; }
.prob { flex-direction: column-reverse; justify-content: center; gap: 6px; padding-right: 2px; border: 0; background: #fff; }
.prob span { writing-mode: vertical-rl; transform: rotate(180deg); }
.impact { gap: 3px; padding-left: 2px; border: 0; background: #fff; font-size: 11px; }
.risk { background: #c8c8c8; font-size: 8px; font-weight: 700; }
.sides { z-index: 2; margin-left: -1px; justify-content: center; border-left: 1px solid #000; border-right-color: #000; background: #fff; }
.two { text-align: center; white-space: pre; }
.ruled { border-top: 2px solid #2b1c08; }
.option { justify-content: flex-start; padding-left: 2px; font-size: 11px; line-height: 13px; }

.vscroll { flex: none; display: flex; flex-direction: column; align-items: center; width: 21px; padding: 3px 3px 0; background: linear-gradient(#f0f0f0, #f0f0f0) center / 15px 100% no-repeat; }
.vscroll button, .hscroll button { flex: none; width: 15px; height: 15px; border: 1px solid #ababab; background: #fff; }
.vscroll .thumb { width: 15px; height: 64px; border: 1px solid #ababab; background: #fff; }
.spring { flex: 1; }

.sheets { flex: none; display: flex; align-items: center; height: 28px; padding-right: 21px; border-top: 1px solid #ababab; background: #f5f5f5; font: 12px/16px "Noto Sans", "Open Sans", sans-serif; }
.nav { width: 28px; }
.nav:first-child { margin-left: 15px; }
.side { border: 4px solid transparent; }
.side.l { border-right-color: #c4c4c4; border-left: 0; }
.side.r { border-left-color: #c4c4c4; border-right: 0; }
.side.dark.l { border-right-color: #666; }
.side.dark.r { border-left-color: #666; }
.st { height: 22px; padding: 0 13px; }
.active { align-self: flex-start; width: 86px; height: 25px; margin: -1px 2px 0 29px; padding: 2px 0 0; border: solid #ababab; border-width: 0 1px; border-bottom: 2px solid #217346; background: linear-gradient(#fff, #a8f0ff); color: #217346; font-weight: 700; }
.cyan { padding: 0; background: #00c8ff; color: #222; }
.guide { width: 96px; margin-right: 5px; }
.example { width: 71px; margin-right: 2px; }
.bar { border-right: 1px solid #ababab; }
.bar { min-width: 94px; }
.bar + .bar { min-width: 118px; }
.add { margin: 0 auto 0 33px; }
.sheets .dots { margin: 0 15px; }
.hscroll { display: flex; width: 38%; max-width: 474px; min-width: 200px; }
.hscroll .thumb { flex: 1; height: 15px; margin-right: 9px; border: 1px solid #ababab; border-left: 0; background: #fff; }

.status { flex: none; display: flex; align-items: center; height: 22px; padding-right: 8px; background: #217346; color: #fff; font-size: 11px; }
.ready { margin: 0 auto 0 7px; }
.view { width: 38px; height: 22px; }
.view.on { background: #0e5c2f; }
.zoom { width: 14px; font-size: 16px; font-weight: 700; }
.status input { width: 102px; height: 14px; margin: 0; appearance: none; background: linear-gradient(#fff, #fff) center / 100% 1px no-repeat, linear-gradient(#fff, #fff) center / 1px 5px no-repeat; }
.status input::-webkit-slider-thumb { appearance: none; width: 4px; height: 11px; background: #fff; }
.pc { margin-left: 12px; }
.edge { flex: none; height: 2px; background: #33292b; }

.activate { position: absolute; right: 53px; bottom: 33px; z-index: 5; color: rgba(130, 130, 130, .6); font: 14px/20px "Noto Sans", sans-serif; pointer-events: none; white-space: nowrap; }
.activate p { margin: 0; }
.activate .big1 { font: 19px/26px "Open Sans", sans-serif; }
</style>
